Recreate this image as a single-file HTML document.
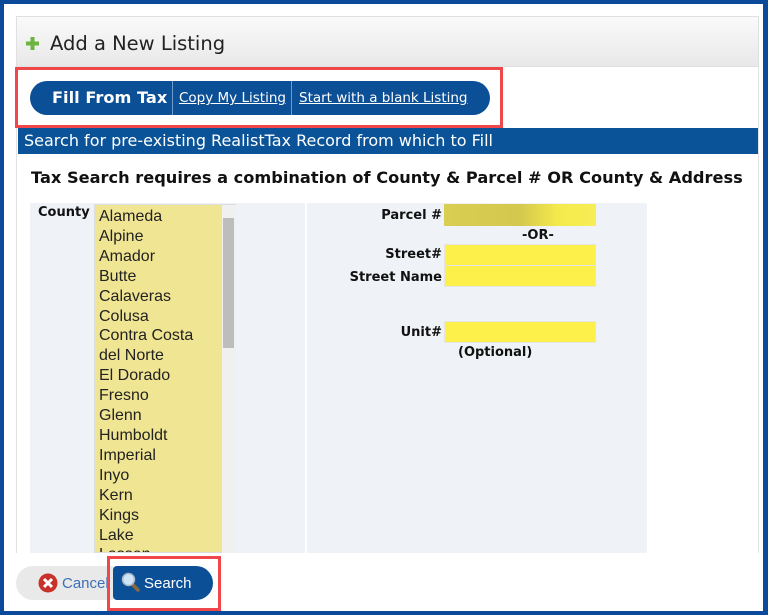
<!DOCTYPE html>
<html><head><meta charset="utf-8"><style>
*{margin:0;padding:0;box-sizing:border-box}
html,body{width:768px;height:615px;overflow:hidden;background:#0b4a9a}
.frame{position:absolute;left:4px;top:4px;width:759px;height:607px;background:#fff}
.card{position:absolute;left:16px;top:16px;width:743px;height:595px;border:1px solid #e2e2e2;border-bottom:none;background:#fff}
.hdr{position:absolute;left:16px;top:16px;width:743px;height:51px;background:linear-gradient(#fafafa,#e8e8e8);border:1px solid #e0e0e0}
.hdr span{position:absolute;left:33px;top:15px;font:19.5px "DejaVu Sans",sans-serif;color:#222}
.plus{position:absolute;left:26px;top:37px;width:13px;height:13px}
.red{position:absolute;border:3px solid #f0484a}
.pill{position:absolute;left:30px;top:81px;width:460px;height:34px;background:#0b4f96;border-radius:17px;color:#fff;font-family:"DejaVu Sans",sans-serif}
.pill div{position:absolute;top:0;height:34px;line-height:34px}
.sep{position:absolute;top:0;width:1px;height:34px;background:#6f9ccc}
.bar{position:absolute;left:18px;top:128px;width:740px;height:26px;background:#0b5399;color:#fff;font:16px "DejaVu Sans",sans-serif;line-height:26px;padding-left:6px}
.title{position:absolute;left:31px;top:168px;font:bold 16.2px "DejaVu Sans",sans-serif;color:#111}
.form{position:absolute;left:30px;top:203px;width:617px;height:350px;background:#eff3f7}
.vline{position:absolute;left:305px;top:203px;width:2px;height:350px;background:#fff}
.lbl{position:absolute;font:bold 13px "DejaVu Sans",sans-serif;color:#111;text-align:right}
.list{position:absolute;left:94px;top:204px;width:142px;height:349px;background:#f0e592;border:1px solid #ddd;overflow:hidden;padding-top:2px}
.list div{font:16px "Liberation Sans",sans-serif;color:#222;line-height:19.9px;padding-left:4px}
.sb{position:absolute;left:222px;top:205px;width:14px;height:348px;background:#f0f0f0}
.thumb{position:absolute;left:223px;top:218px;width:11px;height:130px;background:#bdbdbd}
.inp{position:absolute;left:444px;width:152px;height:22px;background:#fdf04a;border:1px solid #e5e5e5}
.btn{position:absolute;top:566px;height:34px;border-radius:17px;font:15px "Liberation Sans",sans-serif}
</style></head><body>
<div class="frame"></div>
<div class="card"></div>
<div class="hdr"><span>Add a New Listing</span></div>
<svg class="plus" viewBox="0 0 13 13"><path d="M4.5 0h4v4.5H13v4H8.5V13h-4V8.5H0v-4h4.5z" fill="#6cb33f"/></svg>
<div class="red" style="left:15px;top:67px;width:488px;height:61px"></div>
<div class="pill">
<div style="left:22px;font-weight:bold;font-size:16.2px">Fill From Tax</div>
<span class="sep" style="left:142px"></span>
<div style="left:149px;font-size:13.5px;text-decoration:underline">Copy My Listing</div>
<span class="sep" style="left:261px"></span>
<div style="left:269px;font-size:13.5px;text-decoration:underline">Start with a blank Listing</div>
</div>
<div class="bar">Search for pre-existing RealistTax Record from which to Fill</div>
<div class="title">Tax Search requires a combination of County &amp; Parcel # OR County &amp; Address</div>
<div class="form"></div>
<div class="vline"></div>
<div class="lbl" style="left:38px;top:205px">County</div>
<div class="list">
<div>Alameda</div><div>Alpine</div><div>Amador</div><div>Butte</div><div>Calaveras</div><div>Colusa</div><div>Contra Costa</div><div>del Norte</div><div>El Dorado</div><div>Fresno</div><div>Glenn</div><div>Humboldt</div><div>Imperial</div><div>Inyo</div><div>Kern</div><div>Kings</div><div>Lake</div><div>Lassen</div>
</div>
<div class="sb"></div><div class="thumb"></div>
<div class="lbl" style="left:340px;top:208px;width:102px">Parcel #</div>
<div class="inp" style="top:204px;height:22px;border:none;background:linear-gradient(90deg,#d8ce52,#d4c84e 50%,#f5ea4c 75%,#f7ed55)"></div>
<div class="lbl" style="left:522px;top:228px">-OR-</div>
<div class="lbl" style="left:340px;top:247px;width:102px">Street#</div>
<div class="inp" style="top:244px"></div>
<div class="lbl" style="left:330px;top:270px;width:112px">Street Name</div>
<div class="inp" style="top:265px"></div>
<div class="lbl" style="left:340px;top:325px;width:102px">Unit#</div>
<div class="inp" style="top:321px"></div>
<div class="lbl" style="left:458px;top:345px">(Optional)</div>
<div style="position:absolute;left:16px;top:553px;width:743px;height:58px;background:#fff"></div>
<div class="btn" style="left:16px;width:110px;background:#e9e9e9;color:#3d6fb8">
<svg style="position:absolute;left:22px;top:7px" width="20" height="20" viewBox="0 0 20 20"><circle cx="10" cy="10" r="9.5" fill="#c8322a"/><path d="M6 6l8 8M14 6l-8 8" stroke="#fff" stroke-width="3"/></svg>
<span style="position:absolute;left:46px;top:9px">Cancel</span></div>
<div class="btn" style="left:113px;width:100px;background:#0b4f96;color:#fff;border-radius:4px 17px 17px 4px">
<svg style="position:absolute;left:8px;top:6px" width="20" height="20" viewBox="0 0 20 20"><path d="M10 11l7 7" stroke="#8a6a3a" stroke-width="3.5" stroke-linecap="round"/><circle cx="7.5" cy="7.5" r="6" fill="#cfe4f7" stroke="#a8b8c8" stroke-width="1.5"/></svg>
<span style="position:absolute;left:31px;top:9px">Search</span></div>
<div class="red" style="left:107px;top:556px;width:114px;height:55px"></div>
</body></html>
